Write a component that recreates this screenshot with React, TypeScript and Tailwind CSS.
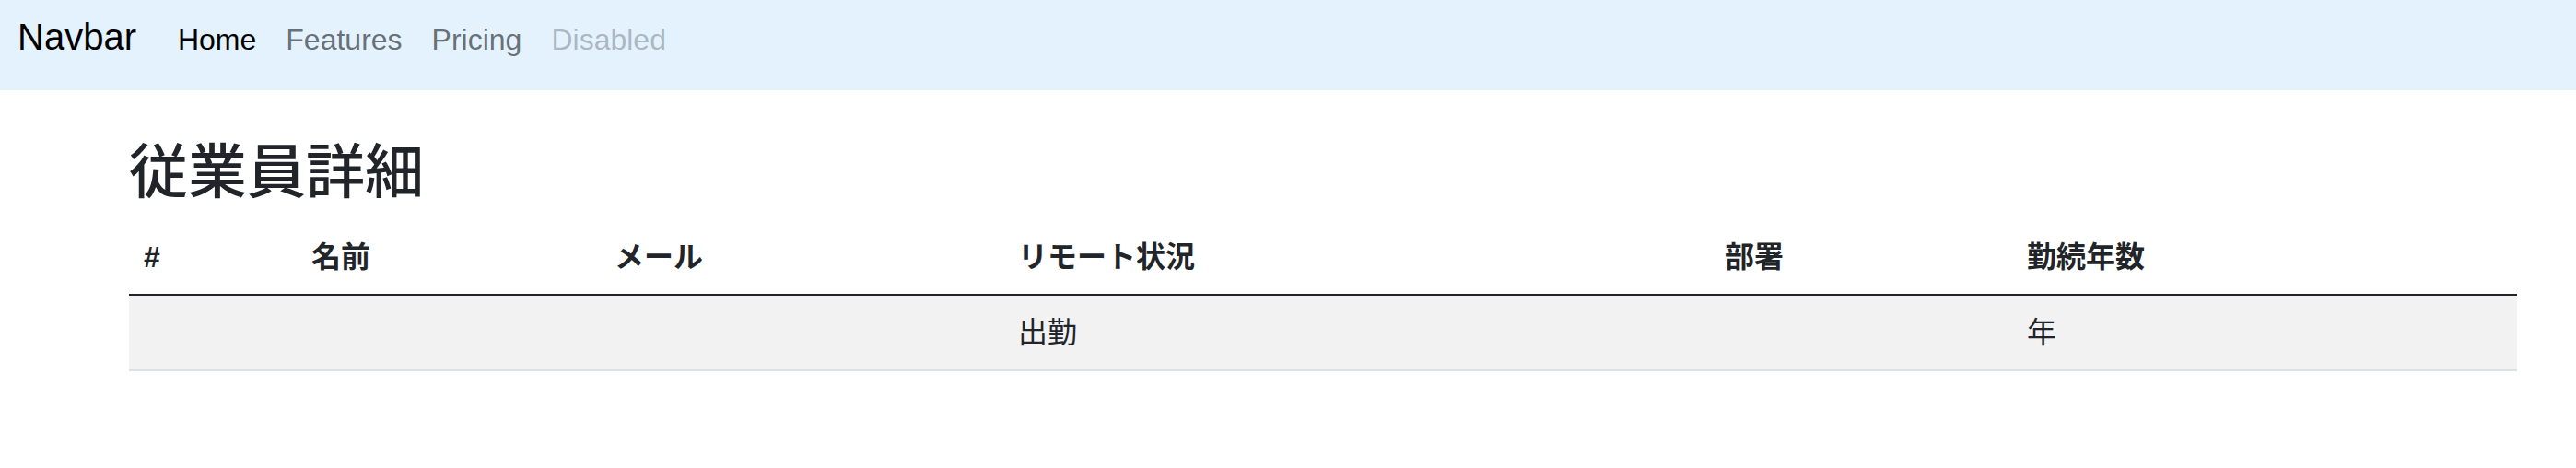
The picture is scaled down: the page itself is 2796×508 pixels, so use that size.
import React from "react";

const headers = ["#", "名前", "メール", "リモート状況", "部署", "勤続年数"];
const widths = [182, 329, 438, 767, 328, 548];
const row = ["", "", "", "出勤", "", "年"];

export default function App() {
  return (
    <div className="w-full min-h-[508px] bg-white text-[#212529] font-['Liberation_Sans','Noto_Sans_CJK_JP',sans-serif]">
      <nav className="h-[98px] bg-[#e3f2fd] flex items-baseline pt-[20px] pl-[19px]">
        <span className="text-[40px] leading-none text-black mr-[29px]">Navbar</span>
        <span className="px-[16px] text-[32px] leading-none text-black">Home</span>
        <span className="px-[16px] text-[32px] leading-none text-[rgba(33,37,41,0.65)]">Features</span>
        <span className="px-[16px] text-[32px] leading-none text-[rgba(33,37,41,0.65)]">Pricing</span>
        <span className="px-[16px] text-[32px] leading-none text-[rgba(33,37,41,0.3)]">Disabled</span>
      </nav>
      <main className="ml-[140px] mr-[64px]">
        <h2 className="mt-[51px] mb-[13px] text-[64px] leading-[1.2] font-medium">従業員詳細</h2>
        <table className="w-full table-fixed border-separate border-spacing-0">
          <colgroup>
            {widths.map((w, i) => (
              <col key={i} style={{ width: i === widths.length - 1 ? undefined : w }} />
            ))}
          </colgroup>
          <thead>
            <tr>
              {headers.map((h) => (
                <th
                  key={h}
                  className="p-[16px] text-left text-[32px] leading-[48px] font-bold border-b-2 border-[#212529]"
                >
                  {h}
                </th>
              ))}
            </tr>
          </thead>
          <tbody>
            <tr>
              {row.map((c, i) => (
                <td
                  key={i}
                  className="p-[16px] text-[32px] leading-[48px] bg-[#f2f2f2] border-b-2 border-[#dee2e6]"
                >
                  {c}
                </td>
              ))}
            </tr>
          </tbody>
        </table>
      </main>
    </div>
  );
}
